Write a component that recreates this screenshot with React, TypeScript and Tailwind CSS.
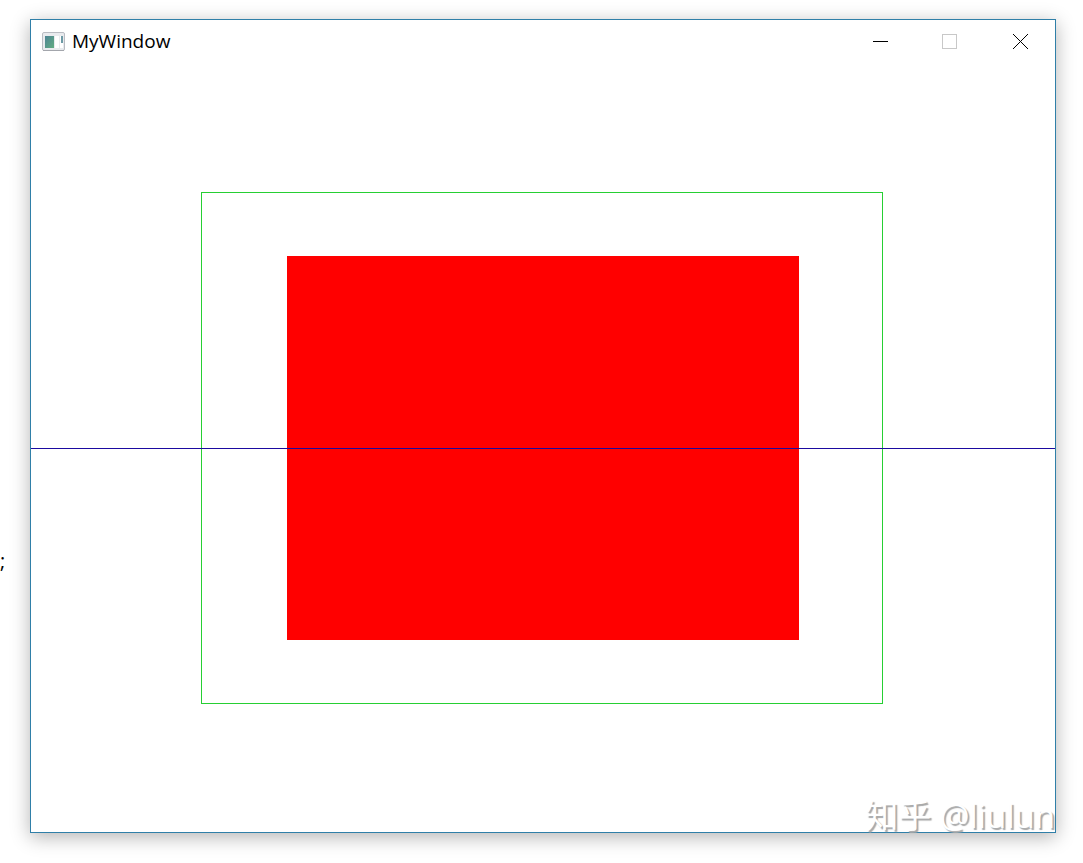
import type { ReactNode } from 'react'

interface CaptionButtonProps {
  label: string
  disabled?: boolean
  children: ReactNode
}

function CaptionButton({ label, disabled, children }: CaptionButtonProps) {
  return (
    <button
      type="button"
      aria-label={label}
      disabled={disabled}
      className="flex h-full w-[70px] items-center justify-center text-black enabled:hover:bg-gray-200 disabled:text-[#c8c8c8]"
    >
      <svg width="16" height="16" viewBox="0 0 16 16" fill="none" stroke="currentColor">
        {children}
      </svg>
    </button>
  )
}

function AppIcon() {
  return (
    <svg width="24" height="20" viewBox="0 0 24 20" aria-hidden="true">
      <defs>
        <linearGradient id="pane" x1="0" y1="0" x2="1" y2="1">
          <stop offset="0" stopColor="#4d8494" />
          <stop offset="1" stopColor="#62ad82" />
        </linearGradient>
      </defs>
      <rect x="0.5" y="0.5" width="22" height="18" rx="1.5" fill="#e9ebee" stroke="#b9bcc2" />
      <path d="M1 18.5h21" stroke="#a3a6ac" />
      <rect x="3" y="4" width="9" height="12" fill="url(#pane)" />
      <rect x="13" y="4" width="4" height="12" fill="#fff" />
      <rect x="18" y="4" width="3" height="12" fill="#fff" />
      <rect x="19" y="4" width="2" height="7" fill="#6d9aa5" />
    </svg>
  )
}

function TitleBar() {
  return (
    <header className="flex h-11 items-center">
      <div className="flex flex-1 items-center gap-1.5 pl-[11px]">
        <AppIcon />
        <h1 className="pb-0.5 text-[19px] leading-6 text-black">MyWindow</h1>
      </div>
      <div className="flex h-full">
        <CaptionButton label="Minimize">
          <path d="M1 7.5h15" />
        </CaptionButton>
        <CaptionButton label="Maximize" disabled>
          <rect x="0.5" y="0.5" width="14" height="14" />
        </CaptionButton>
        <CaptionButton label="Close">
          <path d="M1 0l15 15M16 0l-15 15" />
        </CaptionButton>
      </div>
    </header>
  )
}

function Canvas() {
  return (
    <svg viewBox="0 0 1024 768" className="block w-full" shapeRendering="crispEdges" aria-hidden="true">
      <rect x="256" y="192" width="512" height="384" fill="#ff0000" />
      <rect x="170.5" y="128.5" width="681" height="511" fill="none" stroke="#26cf33" />
      <path d="M0 384.5h1024" stroke="#1b0aa0" />
    </svg>
  )
}

export default function App() {
  return (
    <div className="flex min-h-screen overflow-hidden bg-white pt-[19px] pr-[27px] pb-[30px] font-['Open_Sans','Noto_Sans_CJK_SC',sans-serif]">
      <div className="w-[30px] shrink-0 pt-[528px] text-xl leading-7 text-black">;</div>

      <main className="relative flex-1 self-start border border-[#2f7fa8] bg-white shadow-[0_4px_18px_rgba(0,0,0,0.3)]">
        <TitleBar />
        <Canvas />
        <p className="absolute right-0 bottom-0 text-[33px] leading-8 whitespace-nowrap text-white [text-shadow:2px_2px_1px_#a8a8a8]">
          知乎 @liulun
        </p>
      </main>
    </div>
  )
}
